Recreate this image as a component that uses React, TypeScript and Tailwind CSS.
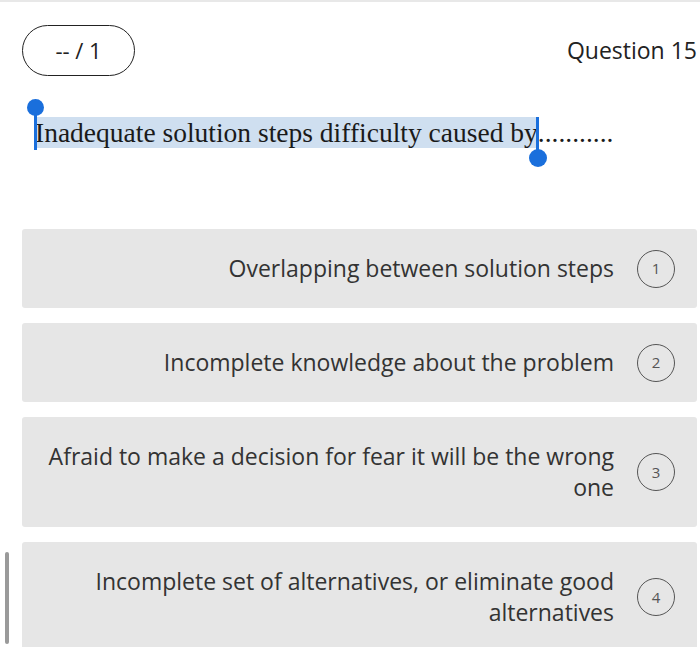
const options = [
  "Overlapping between solution steps",
  "Incomplete knowledge about the problem",
  "Afraid to make a decision for fear it will be the wrong one",
  "Incomplete set of alternatives, or eliminate good alternatives",
];

function Option({ text, n }: { text: string; n: number }) {
  return (
    <div className="flex items-center justify-end gap-[23px] rounded-[3px] bg-[#e6e6e6] py-6 pl-5 pr-[22px]">
      <p className="text-right text-[23px] leading-[31px] text-[#333]">{text}</p>
      <span className="-my-1 flex h-[38px] w-[38px] shrink-0 items-center justify-center rounded-full border-[1.5px] border-[#555] text-[15px] text-[#555]">
        {n}
      </span>
    </div>
  );
}

export default function App() {
  return (
    <div className="relative h-[647px] w-[700px] overflow-hidden border-t-2 border-[#e8e8e8] bg-white font-['Open_Sans',sans-serif]">
      <div className="flex items-center justify-between pl-[22px] pr-[3px] pt-[23px]">
        <div className="flex h-[51px] w-[113px] items-center justify-center rounded-full border-[1.5px] border-[#222] text-[22px] text-[#222]">
          -- / 1
        </div>
        <div className="text-[23px] text-[#222]">Question 15</div>
      </div>

      <div className="mt-[40px] pl-[35px] font-['Liberation_Serif',serif] text-[27.5px] leading-[33px] text-[#1a1a1a]">
        <span className="relative bg-[#cfdff0]">
          <span className="absolute -top-[9px] left-[-1px] h-[42px] w-[3px] bg-[#1a6fdc]" />
          <span className="absolute -top-[18px] -left-[8px] h-[17px] w-[17px] rounded-full bg-[#1a6fdc]" />
          Inadequate solution steps difficulty caused by
          <span className="absolute -right-[1px] top-0 h-[43px] w-[3px] bg-[#1a6fdc]" />
          <span className="absolute -right-[9px] top-[32px] h-[18px] w-[18px] rounded-full bg-[#1a6fdc]" />
        </span>
        <span>...........</span>
      </div>

      <div className="mt-[80px] flex flex-col gap-[15px] pl-[22px] pr-[3px]">
        {options.map((o, i) => (
          <Option key={i} text={o} n={i + 1} />
        ))}
      </div>

      <div className="absolute left-[5px] top-[550px] h-[92px] w-[4px] rounded-full bg-[#9a9a9a]" />
    </div>
  );
}
